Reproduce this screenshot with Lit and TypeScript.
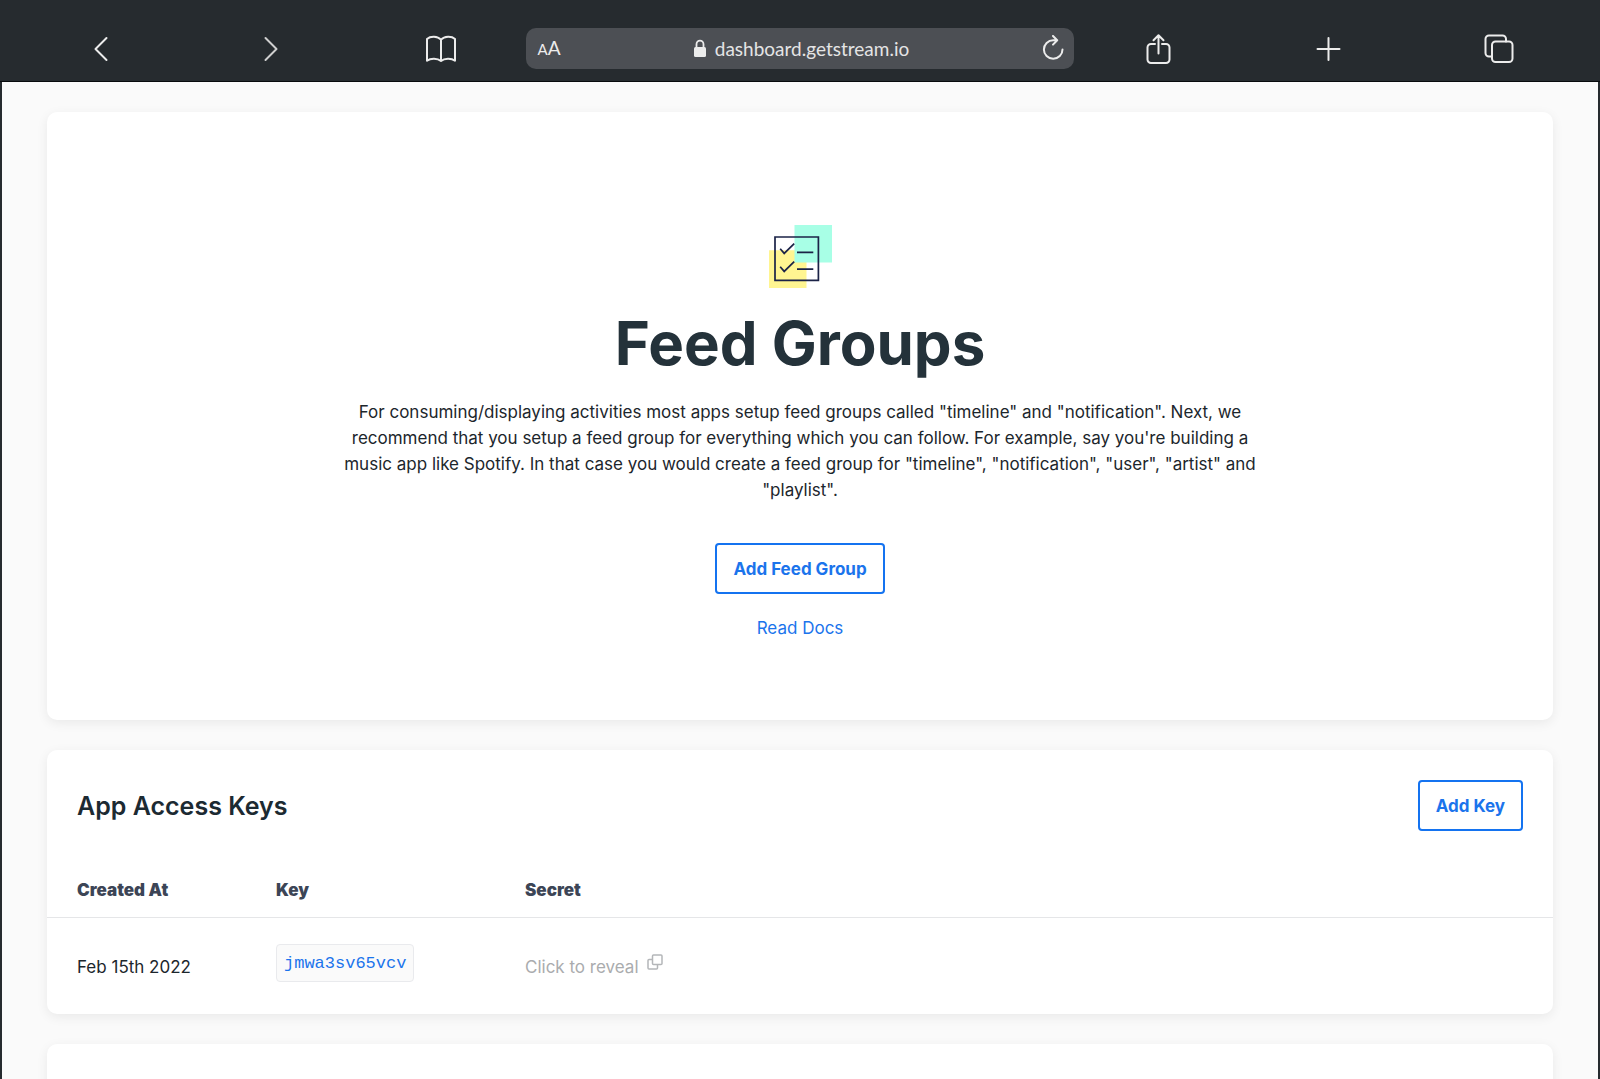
import { LitElement, html, css, svg } from "lit";
import { customElement } from "lit/decorators.js";

const icons = {
  back: svg`<path d="M21.5 5 10.500 16l11 11" />`,
  forward: svg`<path d="M10.500 5 21.500 16l-11 11" />`,
  book: svg`<path d="M16 6.500v21M16 6.700C12.500 2.800 5.500 2.800 2 5.900v21.800C5.500 25.200 12.500 25.200 16 28c3.500-2.800 10.500-2.800 14-.3V5.900C26.500 2.800 19.500 2.800 16 6.700Z" />`,
  share: svg`<path d="M12 11H8a3.500 3.500 0 0 0-3.500 3.500V26.500A3.500 3.500 0 0 0 8 30h15a3.500 3.500 0 0 0 3.500-3.500V14.500A3.500 3.500 0 0 0 23 11h-4M15.500 20.500V2.500M10.500 7.200l5-5 5 5" />`,
  plus: svg`<path d="M15.500 5v22M4.500 16h22" />`,
  tabs: svg`<path d="M9 23.500H6A3.500 3.500 0 0 1 2.500 20V6A3.500 3.500 0 0 1 6 2.500h13.500A3.500 3.500 0 0 1 23 6v2.500" /><rect x="9" y="8.500" width="20.500" height="20.500" rx="3.500" />`,
};

@customElement("browser-bar")
export class BrowserBar extends LitElement {
  static styles = css`
    :host {
      display: block;
    }
    .bar {
      display: grid;
      grid-template-columns: repeat(3, 1fr) 35% repeat(3, 1fr);
      align-items: end;
      box-sizing: border-box;
      height: 82px;
      padding: 0 16px 12px;
      background: #262b2f;
      border-bottom: 1px solid #080b0d;
    }
    .tool,
    .small {
      display: flex;
      align-items: center;
      justify-content: center;
      padding: 0;
      border: 0;
      background: none;
      color: #ececec;
      cursor: pointer;
    }
    .tool {
      height: 41px;
    }
    .tool.dim {
      color: #cfcfcf;
    }
    .glyph {
      fill: none;
      stroke: currentColor;
      stroke-width: 2;
      stroke-linecap: round;
      stroke-linejoin: round;
    }
    .address {
      display: flex;
      align-items: center;
      justify-content: space-between;
      box-sizing: border-box;
      height: 41px;
      padding: 0 8px 0 12px;
      border-radius: 10px;
      background: #4c4f54;
    }
    .site {
      display: flex;
      align-items: center;
      gap: 9px;
      color: #e4e4e5;
      font: 19px/24px Lato, sans-serif;
    }
    .small {
      align-items: baseline;
      font: 19px/24px Lato, sans-serif;
    }
    .letter {
      font-size: 15px;
    }
  `;

  private tool(name: keyof typeof icons, label: string, dim = false) {
    return html`<button class="tool ${dim ? "dim" : ""}" aria-label=${label}>
      <svg class="glyph" width="32" height="32" viewBox="0 0 32 32">${icons[name]}</svg>
    </button>`;
  }

  render() {
    return html`
      <nav class="bar" aria-label="Browser">
        ${this.tool("back", "Back")} ${this.tool("forward", "Forward", true)}
        ${this.tool("book", "Bookmarks")}
        <div class="address">
          <button class="small" aria-label="Text size"><span class="letter">A</span>A</button>
          <div class="site">
            <svg width="12" height="20" viewBox="0 0 12 20">
              <rect x="0" y="8" width="12" height="10" rx="1.500" fill="#ececec" />
              <path d="M2.500 9V5.200a3.500 3.500 0 0 1 7 0V9" fill="none" stroke="#ececec" stroke-width="1.800" />
            </svg>
            <span>dashboard.getstream.io</span>
          </div>
          <button class="small" aria-label="Reload">
            <svg class="glyph" width="24" height="28" viewBox="0 0 24 28">
              <path d="M20.500 14.500A9.300 9.300 0 1 1 11.200 5.200h3.300M11 1l4.200 4.200L11 9.600" />
            </svg>
          </button>
        </div>
        ${this.tool("share", "Share")} ${this.tool("plus", "New tab")} ${this.tool("tabs", "Tabs")}
      </nav>
    `;
  }
}

interface AccessKey {
  created: string;
  key: string;
}

@customElement("app-root")
export class AppRoot extends LitElement {
  static styles = css`
    :host {
      display: block;
      height: 100vh;
      overflow: hidden;
      background: #fafafa;
      color: #1c262c;
      font: 17px/26px Inter, sans-serif;
    }
    .shell {
      display: flex;
      flex-direction: column;
      min-height: 100%;
    }
    .page {
      display: flex;
      flex: 1;
      flex-direction: column;
      gap: 30px;
      padding: 30px 45px;
      border: solid #262b2f;
      border-width: 0 2px;
    }
    .card {
      border-radius: 10px;
      background: #fff;
      box-shadow: 0 3px 12px rgba(0, 0, 0, 0.07);
    }
    .hero {
      display: flex;
      flex-direction: column;
      align-items: center;
      padding: 113px 30px 79px;
      text-align: center;
    }
    .title {
      margin: 19px 0 20px;
      color: #24323a;
      font-size: 60px;
      line-height: 72px;
      font-weight: 700;
    }
    .lead {
      max-width: 940px;
      margin: 0 0 40px;
    }
    .button {
      box-sizing: border-box;
      height: 51px;
      padding: 0 16px;
      border: 2px solid #1473f0;
      border-radius: 4px;
      background: #fff;
      color: #1b74ec;
      font: 700 17px/26px Inter, sans-serif;
      cursor: pointer;
    }
    .link {
      margin-top: 21px;
      color: #1b74ec;
      text-decoration: none;
    }
    .head {
      display: flex;
      align-items: center;
      justify-content: space-between;
      padding: 30px;
    }
    .subtitle {
      margin: 0;
      color: #1c2a32;
      font-size: 25px;
      line-height: 30px;
      font-weight: 600;
    }
    .keys {
      width: 100%;
      border-collapse: collapse;
      table-layout: fixed;
      text-align: left;
    }
    .date-col {
      width: 199px;
    }
    .key-col {
      width: 249px;
    }
    .label {
      height: 54px;
      padding: 2px 0 0 30px;
      border-bottom: 1px solid #e5e6e8;
      color: #3c4556;
      font-weight: 900;
    }
    .cell {
      height: 94px;
      padding: 2px 0 0 30px;
    }
    .chip {
      display: inline-block;
      margin-bottom: 8px;
      padding: 6px 7px 4px;
      border: 1px solid #e9eaed;
      border-radius: 4px;
      background: #fafafa;
      color: #1b74ec;
      font: 17px/26px "Liberation Mono", monospace;
      vertical-align: middle;
    }
    .reveal {
      display: flex;
      gap: 8px;
      padding: 0;
      border: 0;
      background: none;
      color: #aaacae;
      font: inherit;
      cursor: pointer;
    }
    .next {
      flex: 1;
      min-height: 120px;
    }
  `;

  private keys: AccessKey[] = [{ created: "Feb 15th 2022", key: "jmwa3sv65vcv" }];

  private row(item: AccessKey) {
    return html`<tr>
      <td class="cell">${item.created}</td>
      <td class="cell"><code class="chip">${item.key}</code></td>
      <td class="cell">
        <button class="reveal">
          Click to reveal
          <svg width="16" height="16" viewBox="0 0 16 16" fill="none" stroke="#b4b6b9" stroke-width="1.500">
            <rect x="5.500" y="1" width="9.500" height="9.500" rx="1" />
            <path d="M5.500 5.500H2a1 1 0 0 0-1 1V14a1 1 0 0 0 1 1h7.500a1 1 0 0 0 1-1v-3.500" />
          </svg>
        </button>
      </td>
    </tr>`;
  }

  render() {
    return html`
      <div class="shell">
        <browser-bar></browser-bar>
        <main class="page">
          <section class="card hero">
            <svg width="63" height="63" viewBox="0 0 63 63" fill="none" aria-hidden="true">
              <path fill="#fff591" d="M0 25.300h37.500V63H0z" />
              <path fill="#a8ffe6" d="M25.500 0H63v37.500H25.500z" />
              <g stroke="#1b2347" stroke-width="1.700">
                <path d="M6 12h43.400v43.400H6zM28 27.400h16.300M28 44.200h16.300" />
                <path d="m11.200 23.800 4 4.600 10-9.800M11.200 41.800l4 4.600 10-9.800" />
              </g>
            </svg>
            <h1 class="title">Feed Groups</h1>
            <p class="lead">
              For consuming/displaying activities most apps setup feed groups called "timeline" and
              "notification". Next, we recommend that you setup a feed group for everything which you
              can follow. For example, say you're building a music app like Spotify. In that case you
              would create a feed group for "timeline", "notification", "user", "artist" and
              "playlist".
            </p>
            <button class="button">Add Feed Group</button>
            <a class="link" href="#docs">Read Docs</a>
          </section>
          <section class="card">
            <header class="head">
              <h2 class="subtitle">App Access Keys</h2>
              <button class="button">Add Key</button>
            </header>
            <table class="keys">
              <colgroup>
                <col class="date-col" />
                <col class="key-col" />
                <col />
              </colgroup>
              <thead>
                <tr>
                  <th class="label" scope="col">Created At</th>
                  <th class="label" scope="col">Key</th>
                  <th class="label" scope="col">Secret</th>
                </tr>
              </thead>
              <tbody>
                ${this.keys.map((item) => this.row(item))}
              </tbody>
            </table>
          </section>
          <section class="card next"></section>
        </main>
      </div>
    `;
  }
}
